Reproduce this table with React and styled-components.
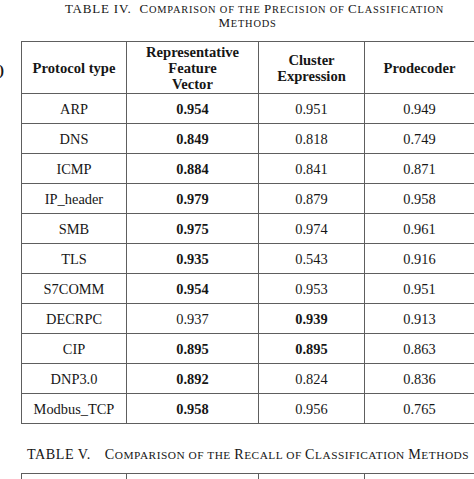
import React from 'react';
import styled, { createGlobalStyle } from 'styled-components';

const GlobalStyle = createGlobalStyle`
	html, body {
		margin: 0;
		padding: 0;
		background: #ffffff;
		overflow: hidden;
	}
	body {
		font-family: 'Liberation Serif', 'Times New Roman', serif;
		color: #161616;
	}
`;

const Page = styled.div`
	display: flex;
	height: 479px;
	overflow: hidden;
`;

const Gutter = styled.div`
	width: 21px;
	flex-shrink: 0;
	padding-top: 62px;
	font-size: 15px;
	font-weight: 700;
	line-height: 17px;
	text-indent: -1px;
	overflow: hidden;
`;

const Main = styled.div`
	flex: 1;
	display: flex;
	flex-direction: column;
	min-width: 0;
`;

const Caption = styled.div`
	font-size: ${(props) => props.size};
	line-height: ${(props) => props.lh};
	letter-spacing: ${(props) => props.track || '0px'};
	text-align: ${(props) => props.align || 'center'};
	text-indent: ${(props) => props.indent || '0px'};
	padding-top: ${(props) => props.top || '0px'};
	padding-left: ${(props) => props.left || '0px'};
	margin-bottom: ${(props) => props.gap || '10px'};
	white-space: nowrap;
`;

const Label = styled.span`
	margin-right: ${(props) => props.space};
`;

// reduced capitals for the small-caps caption text
const Small = styled.span`
	font-size: 0.8em;
	line-height: 0;
	text-transform: uppercase;
`;

const Table = styled.table`
	border-collapse: collapse;
	table-layout: fixed;
	width: 453px;
	flex-shrink: 0;
`;

const HeadCell = styled.th`
	border: 1px solid #5e5e5e;
	height: 51px;
	padding: 0 4px;
	font-size: 14.6px;
	line-height: 16px;
	font-weight: 700;
	text-align: center;
	vertical-align: middle;
`;

const Cell = styled.td`
	border: 1px solid #5e5e5e;
	height: 29px;
	padding: 0 4px;
	font-size: 14.4px;
	line-height: 16px;
	text-align: center;
	vertical-align: middle;
	font-weight: ${(props) => (props.best ? 700 : 400)};
`;

const EmptyHead = styled.th`
	border: 1px solid #5e5e5e;
	height: 40px;
`;

const widths = [105, 132, 106, 110];

const headers = [['Protocol type'], ['Representative', 'Feature', 'Vector'], ['Cluster', 'Expression'], ['Prodecoder']];

// [protocol, rfv, cluster, prodecoder, bold column indexes]
const rows = [
	['ARP', '0.954', '0.951', '0.949', [1]],
	['DNS', '0.849', '0.818', '0.749', [1]],
	['ICMP', '0.884', '0.841', '0.871', [1]],
	['IP_header', '0.979', '0.879', '0.958', [1]],
	['SMB', '0.975', '0.974', '0.961', [1]],
	['TLS', '0.935', '0.543', '0.916', [1]],
	['S7COMM', '0.954', '0.953', '0.951', [1]],
	['DECRPC', '0.937', '0.939', '0.913', [2]],
	['CIP', '0.895', '0.895', '0.863', [1, 2]],
	['DNP3.0', '0.892', '0.824', '0.836', [1]],
	['Modbus_TCP', '0.958', '0.956', '0.765', [1]],
];

const smallCaps = (text) =>
	text.split(' ').map((word, i) => {
		const first = word[0];
		const isCap = first === first.toUpperCase();
		return (
			<React.Fragment key={i}>
				{i > 0 && <Small> </Small>}
				{isCap ? first : <Small>{first}</Small>}
				<Small>{word.slice(1)}</Small>
			</React.Fragment>
		);
	});

const Cols = () => (
	<colgroup>
		{widths.map((w, i) => (
			<col key={i} style={{ width: w }} />
		))}
	</colgroup>
);

export default function App() {
	return (
		<>
			<GlobalStyle />
			<Page>
				<Gutter>)</Gutter>
				<Main>
					<Caption size="13px" lh="14.5px" track="0.8px" indent="14px" top="1.5px" gap="10.5px">
						<Label space="8px">TABLE IV.</Label>
						{smallCaps('Comparison of the Precision of Classification')}
						<br />
						{smallCaps('Methods')}
					</Caption>
					<Table>
						<Cols />
						<thead>
							<tr>
								{headers.map((h) => (
									<HeadCell key={h[0]}>
										{h.map((line, i) => (
											<React.Fragment key={line}>
												{i > 0 && <br />}
												{line}
											</React.Fragment>
										))}
									</HeadCell>
								))}
							</tr>
						</thead>
						<tbody>
							{rows.map((r) => (
								<tr key={r[0]}>
									{r.slice(0, 4).map((v, i) => (
										<Cell key={i} best={r[4].includes(i)}>
											{v}
										</Cell>
									))}
								</tr>
							))}
						</tbody>
					</Table>
					<Caption size="14.2px" lh="17px" track="0.5px" align="left" left="6px" top="21.5px" gap="10px">
						<Label space="14px">TABLE V.</Label>
						{smallCaps('Comparison of the Recall of Classification Methods')}
					</Caption>
					<Table>
						<Cols />
						<thead>
							<tr>
								<EmptyHead />
								<EmptyHead />
								<EmptyHead />
								<EmptyHead />
							</tr>
						</thead>
					</Table>
				</Main>
			</Page>
		</>
	);
}
